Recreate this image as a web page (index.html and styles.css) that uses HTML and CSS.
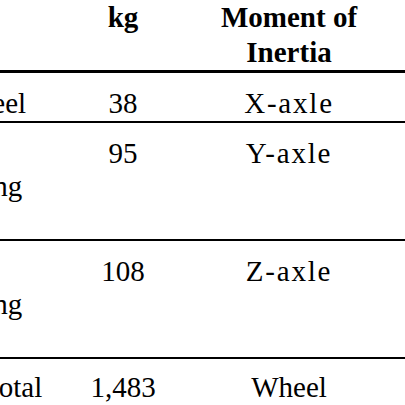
FILE: index.html
```html
<!DOCTYPE html>
<html>
<head>
<meta charset="utf-8">
<link rel="stylesheet" href="styles.css">
</head>
<body>
<table class="spec">
  <colgroup>
    <col class="c-part">
    <col class="c-kg">
    <col class="c-moi">
  </colgroup>
  <thead>
    <tr class="head">
      <th class="part">Part</th>
      <th>kg</th>
      <th>Moment of<br>Inertia</th>
    </tr>
  </thead>
  <tbody>
    <tr class="r1">
      <td class="part">Per wheel</td>
      <td>38</td>
      <td class="axle">X-axle</td>
    </tr>
    <tr class="r2">
      <td class="part">Engine<br>mounting</td>
      <td>95</td>
      <td class="axle">Y-axle</td>
    </tr>
    <tr class="r3">
      <td class="part">Motor<br>mounting</td>
      <td>108</td>
      <td class="axle">Z-axle</td>
    </tr>
    <tr class="r4">
      <td class="part">Grand total</td>
      <td>1,483</td>
      <td>Wheel</td>
    </tr>
  </tbody>
</table>
</body>
</html>
```

FILE: styles.css
```css
html, body {
  margin: 0;
  padding: 0;
  background: #ffffff;
  width: 405px;
  height: 405px;
  overflow: hidden;
}

.spec {
  border-collapse: collapse;
  table-layout: fixed;
  width: 496px;
  margin-left: -89px;
  font-family: "Liberation Serif", "Times New Roman", serif;
  font-size: 29px;
  color: #000;
}

.c-part { width: 164px; }
.c-kg { width: 96px; }
.c-moi { width: 236px; }

.spec th,
.spec td {
  padding: 0;
  text-align: center;
  vertical-align: top;
  border-bottom: 2px solid #000;
}

.spec .part { text-align: left; }

.head th {
  font-weight: bold;
  line-height: 35px;
  height: 70px;
  border-bottom: 3.5px solid #000;
}

.spec td {
  line-height: 33px;
  padding-top: 14px;
}

.r1 td { height: 34px; }
.r2 td, .r3 td { height: 102px; }
.r4 td { border-bottom: none; padding-top: 12px; }

.axle { letter-spacing: 1.8px; }
```
